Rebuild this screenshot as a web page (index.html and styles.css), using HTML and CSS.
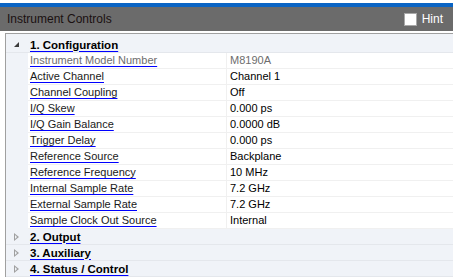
FILE: index.html
```html
<!DOCTYPE html>
<html lang="en">
<head>
    <meta charset="UTF-8">
    <title>Instrument Controls</title>
    <link rel="stylesheet" href="styles.css">
</head>
<body>

<div class="window">
    <div class="accent"></div>
    <div class="header">
        <span class="title">Instrument Controls</span>
        <label class="hint"><span class="box"></span>Hint</label>
    </div>
    <div class="grid">
        <div class="category">
            <span class="toggle open"></span>
            <span class="cat-name">1. Configuration</span>
        </div>
        <div class="row readonly"><span class="name">Instrument Model Number</span><span class="value">M8190A</span></div>
        <div class="row"><span class="name">Active Channel</span><span class="value">Channel 1</span></div>
        <div class="row"><span class="name">Channel Coupling</span><span class="value">Off</span></div>
        <div class="row"><span class="name">I/Q Skew</span><span class="value">0.000 ps</span></div>
        <div class="row"><span class="name">I/Q Gain Balance</span><span class="value">0.0000 dB</span></div>
        <div class="row"><span class="name">Trigger Delay</span><span class="value">0.000 ps</span></div>
        <div class="row"><span class="name">Reference Source</span><span class="value">Backplane</span></div>
        <div class="row"><span class="name">Reference Frequency</span><span class="value">10 MHz</span></div>
        <div class="row"><span class="name">Internal Sample Rate</span><span class="value">7.2 GHz</span></div>
        <div class="row"><span class="name">External Sample Rate</span><span class="value">7.2 GHz</span></div>
        <div class="row"><span class="name">Sample Clock Out Source</span><span class="value">Internal</span></div>
        <div class="category">
            <span class="toggle"></span>
            <span class="cat-name">2. Output</span>
        </div>
        <div class="category">
            <span class="toggle"></span>
            <span class="cat-name">3. Auxiliary</span>
        </div>
        <div class="category">
            <span class="toggle"></span>
            <span class="cat-name">4. Status / Control</span>
        </div>
    </div>
</div>

</body>
</html>
```

FILE: styles.css
```css
body {
    margin: 0;
    background-color: #fff;
    font-family: "Liberation Sans", Arial, sans-serif;
    font-size: 11px;
    overflow: hidden;
}
.window {
    padding-top: 3px;
    height: 276px;
    overflow: hidden;
}
.accent {
    height: 4px;
    background-color: #0a64c4;
}
.header {
    height: 24px;
    background-color: #6b6b6b;
    display: flex;
    align-items: center;
    justify-content: space-between;
    padding: 0 10px 0 7px;
}
.title {
    color: #1a1010;
    font-size: 12px;
}
.hint {
    display: flex;
    align-items: center;
    color: #fff;
    font-size: 12px;
}
.hint .box {
    width: 11px;
    height: 11px;
    background-color: #fff;
    border: 1px solid #a8a8a8;
    margin-right: 5px;
}
.grid {
    margin: 2px 0 0 5px;
    border-top: 1px solid #a0a0a0;
    border-left: 1px solid #a0a0a0;
    background-color: #f0f3f8;
    padding-top: 3px;
    height: 240px;
}
.category {
    height: 15px;
    border-bottom: 1px solid #e4e7ec;
    display: flex;
    align-items: center;
}
.toggle {
    width: 22px;
    height: 15px;
    position: relative;
}
.toggle::before {
    content: "";
    position: absolute;
    left: 8px;
    top: 4px;
    width: 0;
    height: 0;
    border-top: 4px solid transparent;
    border-bottom: 4px solid transparent;
    border-left: 5px solid #a0a0a0;
}
.toggle::after {
    content: "";
    position: absolute;
    left: 9px;
    top: 6px;
    width: 0;
    height: 0;
    border-top: 2px solid transparent;
    border-bottom: 2px solid transparent;
    border-left: 2px solid #f0f3f8;
}
.toggle.open::before {
    left: 8px;
    top: 5px;
    border: none;
    border-bottom: 5px solid #3c3c3c;
    border-left: 5px solid transparent;
}
.toggle.open::after {
    display: none;
}
.cat-name {
    font-weight: bold;
    font-size: 11.5px;
    color: #000;
    padding-left: 2px;
    text-decoration: underline;
    text-decoration-color: #0000ff;
    text-underline-offset: 2px;
}
.row {
    height: 15px;
    margin-left: 22px;
    display: flex;
    background-color: #fff;
    border-bottom: 1px solid #f0f0f0;
}
.name {
    width: 196px;
    padding-left: 2px;
    border-right: 1px solid #f0f0f0;
    color: #1a1a1a;
    line-height: 15px;
    white-space: nowrap;
    text-decoration: underline;
    text-decoration-color: #0000ff;
    text-underline-offset: 2px;
}
.value {
    padding-left: 3px;
    color: #000;
    line-height: 15px;
}
.readonly .name,
.readonly .value {
    color: #6d6d6d;
}
```
